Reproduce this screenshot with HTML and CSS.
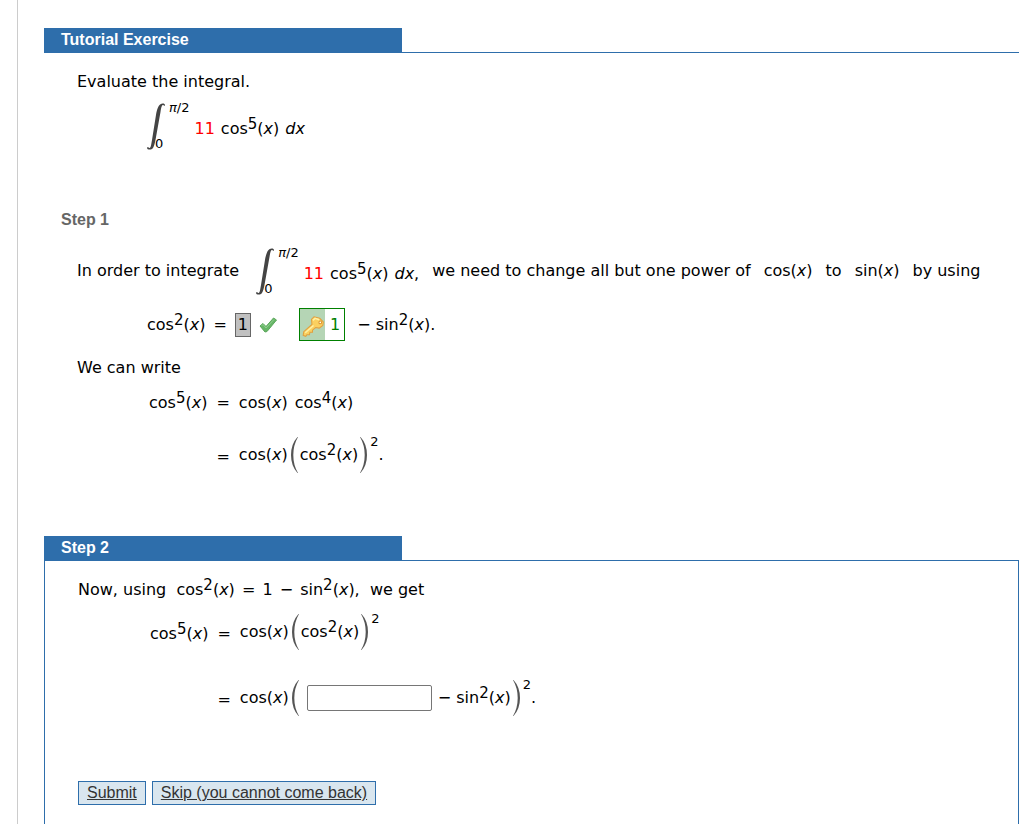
FILE: index.html
```html
<!DOCTYPE html>
<html lang="en">
	<head>
		<meta charset="UTF-8">
		<meta name="viewport" content="width=device-width, initial-scale=1">
		<title>Tutorial Exercise</title>
		<link rel="stylesheet" href="styles.css">
	</head>
	<body>
		<!-- shapes used more than once -->
		<svg class="defs" aria-hidden="true">
			<symbol id="int" viewBox="0 0 18 48"><path d="M0 45.500C0 47.300 1 47.600 3 47.600C6 47.600 7 45 8.300 39L13.500 10C14.300 5 14.800 3 16 3C16.800 3 17 4.200 17.900 3.600C18.300 2.400 17.500 1.400 15.700 1.400C12.300 1.400 10.700 5 9.300 11L5 38C4 44 3.700 46 2.500 46C1.500 46 1.400 44.800 0 45.500Z"/></symbol>
			<symbol id="lp" viewBox="0 0 8 36"><path d="M7.500 0Q1 7 1 18T7.500 36H8Q3.300 28 3.300 18T8 0Z"/></symbol>
			<symbol id="rp" viewBox="0 0 8 36"><path d="M.5 0Q7 7 7 18T.5 36H0Q4.700 28 4.700 18T0 0Z"/></symbol>
		</svg>

		<main class="question">
			<section>
				<div class="bar"><h2>Tutorial Exercise</h2></div>
				<div class="content">
					<p>Evaluate the integral.</p>
					<div class="indent integral-row">
						<span class="integral"><svg><use href="#int"/></svg><span class="limits"><span class="upper"><i>π</i>/2</span><span>0</span></span></span>
						<span class="integrand"><span class="red">11</span> <span>cos<sup>5</sup>(<i>x</i>)</span> <i>dx</i></span>
					</div>
				</div>
			</section>

			<section class="step1">
				<h2>Step 1</h2>
				<div class="content">
					<div class="sentence">
						<span>In order to integrate</span>
						<span class="integral-row">
							<span class="integral"><svg><use href="#int"/></svg><span class="limits"><span class="upper"><i>π</i>/2</span><span>0</span></span></span>
							<span class="integrand"><span class="red">11</span> <span>cos<sup>5</sup>(<i>x</i>)</span> <span><i>dx</i>,</span></span>
						</span>
						<span>we need to change all but one power of</span>
						<span>cos(<i>x</i>)</span>
						<span>to</span>
						<span>sin(<i>x</i>)</span>
						<span>by using</span>
					</div>
					<div class="indent answer-row">
						<span>cos<sup>2</sup>(<i>x</i>)</span>
						<span>=</span>
						<span class="given">1</span>
						<svg class="check" viewBox="0 0 18 16" role="img" aria-label="Correct"><path d="M1 9L4 6.500L7 9.500L14.500 1L17.500 3L8 14.500L6 15Z" fill="#67b667" stroke="#5aa65a"/><path d="M2.500 9L4 7.500L7 11L15 2.500" fill="none" stroke="#8fce8f"/></svg>
						<span class="key">
							<svg viewBox="0 0 24 30" role="img" aria-label="Answer key"><path d="M11 10L13.500 7.500L19 9L22.500 12.500L22 16L18.500 18.500L15 18L12 20.500L12 22.500L9.500 22.500L9 25L6.500 25L5.500 26.500L3 25.500L3.500 22L11.500 15Z" fill="#fbd060" stroke="#e0a040"/><path d="M12.500 11L14.500 9L18.500 10.500M5 23L13 16" fill="none" stroke="#fff0a5" stroke-width="1.500"/><circle cx="19.500" cy="13" r="1.300" fill="#fff" stroke="#dd982f"/></svg>
							<span>1</span>
						</span>
						<span class="rest">− sin<sup>2</sup>(<i>x</i>).</span>
					</div>
					<p>We can write</p>
					<div class="indent equations">
						<span>cos<sup>5</sup>(<i>x</i>)</span>
						<span>=</span>
						<span class="product"><span>cos(<i>x</i>)</span> <span>cos<sup>4</sup>(<i>x</i>)</span></span>
						<span class="eq2">=</span>
						<span class="rhs">cos(<i>x</i>)<svg class="paren"><use href="#lp"/></svg><span>cos<sup>2</sup>(<i>x</i>)</span><svg class="paren"><use href="#rp"/></svg><span class="power">2</span>.</span>
					</div>
				</div>
			</section>

			<section class="step2">
				<div class="bar"><h2>Step 2</h2></div>
				<form class="content boxed">
					<p>Now, using&nbsp; cos<sup>2</sup>(<i>x</i>) <span class="op">=</span> 1 <span class="op">−</span> sin<sup>2</sup>(<i>x</i>),&nbsp; we get</p>
					<div class="indent equations">
						<span>cos<sup>5</sup>(<i>x</i>)</span>
						<span>=</span>
						<span class="rhs">cos(<i>x</i>)<svg class="paren"><use href="#lp"/></svg><span>cos<sup>2</sup>(<i>x</i>)</span><svg class="paren"><use href="#rp"/></svg><span class="power">2</span></span>
						<span class="eq2">=</span>
						<span class="rhs">cos(<i>x</i>)<svg class="paren"><use href="#lp"/></svg><input type="text" name="answer" aria-label="Answer"><span>− sin<sup>2</sup>(<i>x</i>)</span><svg class="paren"><use href="#rp"/></svg><span class="power">2</span>.</span>
					</div>
					<div class="buttons">
						<button type="submit">Submit</button>
						<button type="button">Skip (you cannot come back)</button>
					</div>
				</form>
			</section>
		</main>
	</body>
</html>
```
FILE: styles.css
```css
* { box-sizing: border-box }
body {
	margin: 0;
	background: #fff;
	color: #000;
	font: 16px/24px Verdana, "DejaVu Sans", sans-serif;
}
.defs {
	position: absolute;
	width: 0;
	height: 0;
}
.question {
	margin-left: 17px;
	border-left: 1px solid #ccc;
	padding: 28px 3px 0 26px;
	min-height: 100vh;
}
p { margin: 0 }
h2 {
	margin: 0;
	padding-left: 17px;
	font: bold 16px/24px "Liberation Sans", Arial, sans-serif;
	color: #666;
}
.bar { border-bottom: 1px solid #2e6eab }
.bar h2 {
	width: 358px;
	max-width: 100%;
	background: #2e6eab;
	color: #fff;
}
.content { padding: 17px 0 0 33px }
.indent { margin-left: 70px }
.red { color: #f00 }
.op { margin: 0 2px }
sup {
	font-size: 15px;
	line-height: 0;
	vertical-align: 5px;
}

/* integral sign with its limits */
.integral-row {
	display: flex;
	align-items: center;
	gap: 5px;
}
.integral {
	display: flex;
	height: 48px;
}
.integral svg {
	width: 18px;
	height: 48px;
	fill: #444;
}
.limits {
	display: flex;
	flex-direction: column;
	justify-content: space-between;
	margin-left: -10px;
	font-size: 13px;
	line-height: 12px;
}
.upper { padding-left: 14px }
.integrand {
	display: flex;
	gap: 6px;
	padding-top: 5px;
}
section > .content > .integral-row { margin-top: 8px }

.step1 { padding-top: 58px }
.step1 .content { padding-top: 15px }
.sentence {
	display: flex;
	align-items: center;
	gap: 13px;
}
.sentence .integral-row { padding-left: 4px }
.answer-row {
	display: flex;
	align-items: center;
	gap: 8px;
	margin-top: 13px;
	margin-bottom: 15px;
}
.given {
	padding: 0 2px;
	border: 1px solid #666;
	background: #c0c0c0;
	line-height: 22px;
}
.check {
	width: 18px;
	height: 16px;
}
.key {
	display: flex;
	align-items: center;
	margin-left: 14px;
	border: 1px solid #008000;
	color: #008000;
}
.key svg {
	width: 25px;
	height: 31px;
	background: #b5d5b5;
}
.key span { padding: 0 4px 0 5px }
.rest { margin-left: 4px }

/* lines of working, lined up at the equals sign */
.equations {
	display: grid;
	grid-template-columns: max-content max-content 1fr;
	align-items: center;
	column-gap: 9px;
	padding-left: 2px;
	margin-top: 11px;
}
.eq2 { grid-column: 2 }
.step1 .equations { row-gap: 22px }
.step2 .equations {
	row-gap: 26px;
	margin-top: 12px;
}
.product {
	display: flex;
	gap: 7px;
}
.rhs {
	display: flex;
	align-items: center;
	padding-bottom: 4px;
}
.paren {
	width: 8px;
	height: 36px;
	margin: 0 2px;
	fill: #555;
}
.power {
	align-self: flex-start;
	font-size: 13px;
	line-height: 10px;
}

.step2 { padding-top: 59px }
.boxed {
	border: solid #2e6eab;
	border-width: 0 1px;
	min-height: 264px;
}
input {
	width: 125px;
	height: 26px;
	margin: 0 6px;
	border: 1px solid #767676;
	border-radius: 2px;
	background: #fff;
	font: inherit;
}
.buttons {
	display: flex;
	gap: 6px;
	margin-top: 61px;
}
button {
	height: 24px;
	padding: 0 8px;
	border: 1px solid #2e6eab;
	background: #d9e6ef;
	color: #333;
	font: 16px/20px "Liberation Sans", Arial, sans-serif;
	text-decoration: underline;
}
```
